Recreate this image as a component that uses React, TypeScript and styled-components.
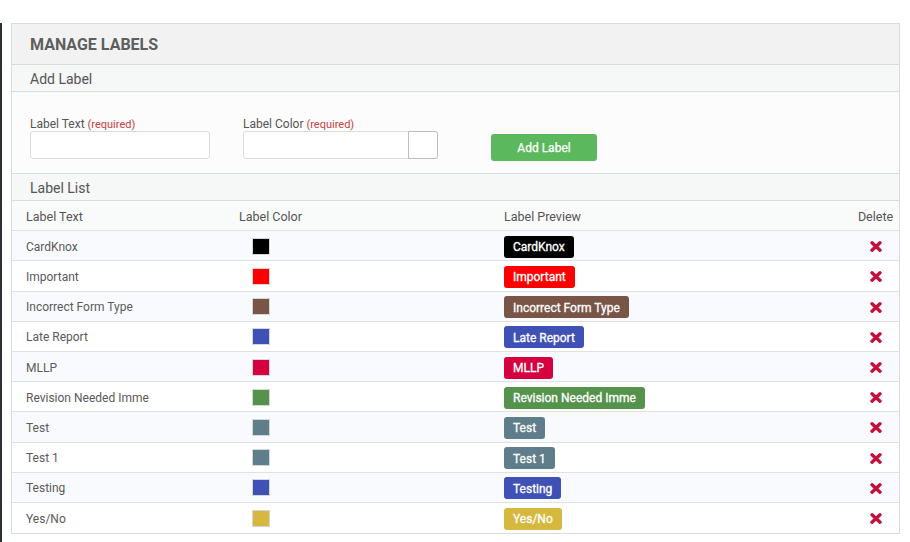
import styled, {createGlobalStyle} from "styled-components";

const GlobalStyle = createGlobalStyle`
    html, body {
        margin: 0;
        padding: 0;
        background: #ffffff;
        font-family: Roboto, "Liberation Sans", Arial, sans-serif;
    }
`

interface Label {
    text: string;
    color: string;
}

const labels: Label[] = [
    {text: "CardKnox", color: "#000000"},
    {text: "Important", color: "#ff0000"},
    {text: "Incorrect Form Type", color: "#795548"},
    {text: "Late Report", color: "#3f51b5"},
    {text: "MLLP", color: "#d5003f"},
    {text: "Revision Needed Imme", color: "#55924b"},
    {text: "Test", color: "#607d8b"},
    {text: "Test 1", color: "#607d8b"},
    {text: "Testing", color: "#3f51b5"},
    {text: "Yes/No", color: "#d5b83d"},
]

const Page = styled.div`
    margin-top: 23px;
    border-left: 2px solid #2b3036;
    padding: 0 10px 9px 9px;
`

const Panel = styled.div`
    border: 1px solid #d9dcdc;
    background: #ffffff;
`

const Title = styled.h1`
    margin: 0;
    height: 40px;
    display: flex;
    align-items: center;
    padding: 0 18px;
    font-size: 16px;
    font-weight: 700;
    color: #5e5e5e;
    background: #f2f2f2;
    border-bottom: 1px solid #d9dcdc;
`

const SectionHeader = styled.h2`
    margin: 0;
    height: 27px;
    display: flex;
    align-items: center;
    padding: 2px 18px 0;
    box-sizing: border-box;
    font-size: 14px;
    font-weight: 400;
    color: #555555;
    background: #f6f7f7;
    border-bottom: 1px solid #d9dcdc;
`

const Form = styled.div`
    height: 82px;
    box-sizing: border-box;
    display: flex;
    align-items: flex-end;
    padding: 0 18px 14px;
    background: #fcfcfc;
    border-bottom: 1px solid #d9dcdc;
`

const Field = styled.div<{ $width: number; $gap: number }>`
    display: flex;
    flex-direction: column;
    width: ${p => p.$width}px;
    margin-right: ${p => p.$gap}px;
`

const FieldLabel = styled.label`
    font-size: 12px;
    line-height: 15px;
    color: #555555;
    margin-bottom: -1px;
`

const Required = styled.span`
    font-size: 11px;
    color: #c8403f;
`

const TextInput = styled.div`
    height: 28px;
    box-sizing: border-box;
    border: 1px solid #dcdcdc;
    border-radius: 3px;
    background: #ffffff;
`

const ColorInput = styled.div`
    display: flex;
    height: 28px;
    box-sizing: border-box;
    border: 1px solid #dcdcdc;
    border-radius: 3px;
    background: #ffffff;
`

const ColorText = styled.div`
    flex: 1;
`

const ColorPick = styled.div`
    width: 28px;
    margin: -1px -1px -1px 0;
    border: 1px solid #bdbdbd;
    border-radius: 0 3px 3px 0;
    background: #ffffff;
`

const AddButton = styled.button`
    width: 106px;
    height: 27px;
    margin-bottom: -2px;
    border: none;
    border-radius: 3px;
    background: #5cb85c;
    color: #ffffff;
    font-family: inherit;
    font-size: 12px;
    font-weight: 400;
    -webkit-text-stroke: 0.25px #ffffff;
`

const Row = styled.div<{ $bg: string }>`
    display: grid;
    grid-template-columns: 213px 265px 1fr 47px;
    align-items: center;
    box-sizing: border-box;
    height: 30.2px;
    padding-top: 2px;
    background: ${p => p.$bg};
    border-bottom: 1px solid #dfe1e3;

    &:last-child {
        border-bottom: none;
    }
`

const HeadCell = styled.div<{ $center?: boolean }>`
    padding-left: ${p => (p.$center ? 0 : 14)}px;
    text-align: ${p => (p.$center ? "center" : "left")};
    font-size: 12.5px;
    color: #555555;
`

const Cell = styled.div<{ $indent?: number; $center?: boolean }>`
    display: flex;
    align-items: center;
    justify-content: ${p => (p.$center ? "center" : "flex-start")};
    padding-left: ${p => p.$indent ?? 0}px;
    font-size: 12px;
    color: #5a5a5a;
`

const Swatch = styled.div<{ $color: string }>`
    width: 16px;
    height: 15px;
    margin-top: -1px;
    border: 1px solid #d6d6d6;
    background: ${p => p.$color};
`

const Badge = styled.span<{ $color: string }>`
    display: inline-flex;
    align-items: center;
    height: 22px;
    padding: 1px 9px 0;
    box-sizing: border-box;
    border-radius: 3px;
    background: ${p => p.$color};
    color: #ffffff;
    font-size: 12px;
    font-weight: 400;
    -webkit-text-stroke: 0.3px #ffffff;
`

function DeleteIcon() {
    return (
        <svg width="12" height="11" viewBox="0 0 12 11">
            <path d="M2 1.8 L10 9.2 M10 1.8 L2 9.2" stroke="#c3113c" strokeWidth="3.4" strokeLinecap="round"/>
        </svg>
    )
}

function App() {
    return (
        <>
            <GlobalStyle/>
            <Page>
                <Panel>
                    <Title>MANAGE LABELS</Title>
                    <SectionHeader>Add Label</SectionHeader>
                    <Form>
                        <Field $width={180} $gap={33}>
                            <FieldLabel>Label Text <Required>(required)</Required></FieldLabel>
                            <TextInput/>
                        </Field>
                        <Field $width={195} $gap={53}>
                            <FieldLabel>Label Color <Required>(required)</Required></FieldLabel>
                            <ColorInput>
                                <ColorText/>
                                <ColorPick/>
                            </ColorInput>
                        </Field>
                        <AddButton>Add Label</AddButton>
                    </Form>
                    <SectionHeader>Label List</SectionHeader>
                    <Row $bg="#f9fafa">
                        <HeadCell>Label Text</HeadCell>
                        <HeadCell>Label Color</HeadCell>
                        <HeadCell>Label Preview</HeadCell>
                        <HeadCell $center>Delete</HeadCell>
                    </Row>
                    {labels.map((label, i) => (
                        <Row key={label.text + i} $bg={i % 2 === 0 ? "#f9fafd" : "#ffffff"}>
                            <Cell $indent={14}>{label.text}</Cell>
                            <Cell $indent={27}><Swatch $color={label.color}/></Cell>
                            <Cell $indent={14}><Badge $color={label.color}>{label.text}</Badge></Cell>
                            <Cell $center><DeleteIcon/></Cell>
                        </Row>
                    ))}
                </Panel>
            </Page>
        </>
    )
}

export default App
